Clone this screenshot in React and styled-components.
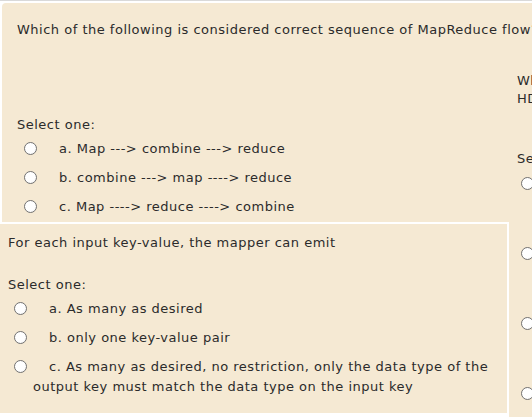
import React from "react";
import styled, { createGlobalStyle } from "styled-components";

const GlobalStyle = createGlobalStyle`
  html, body {
    margin: 0;
    padding: 0;
    background: #ffffff;
  }
  body {
    font-family: "DejaVu Sans", Verdana, sans-serif;
    font-size: 13px;
    letter-spacing: 0.5px;
    color: #2b2b2b;
  }
`;

const Screen = styled.div`
  width: 532px;
  height: 417px;
  overflow: hidden;
  box-sizing: border-box;
  border-top: 1px solid #d9d9d9;
  background: #ffffff;
`;

const Sheet = styled.div`
  display: flex;
  margin: 2px 0 0 2px;
  height: 414px;
  background: #f5e9d3;
  border-top-left-radius: 4px;
`;

const LeftColumn = styled.div`
  flex: 0 0 507px;
  min-width: 0;
  display: flex;
  flex-direction: column;
`;

const RightColumn = styled.div`
  flex: 1;
  min-width: 0;
  padding: 69px 0 0 8px;
  white-space: nowrap;
  overflow: hidden;
`;

const Question = styled.div`
  padding: ${(p) => p.pad};
  line-height: 20px;
`;

const Prompt = styled.div`
  margin-bottom: ${(p) => p.gap}px;
  white-space: ${(p) => (p.nowrap ? "nowrap" : "normal")};
`;

const Select = styled.div`
  margin-bottom: 4px;
`;

const Option = styled.div`
  padding-left: ${(p) => p.indent}px;
  text-indent: -19px;
  line-height: 20px;

  & + & {
    margin-top: 9px;
  }
`;

const Radio = styled.span`
  display: inline-block;
  box-sizing: border-box;
  width: 13px;
  height: 13px;
  border: 1px solid #727272;
  border-radius: 50%;
  background: radial-gradient(circle at 40% 40%, #ffffff 55%, #ececec 100%);
  vertical-align: -2px;
  margin-right: ${(p) => p.gap}px;
  text-indent: 0;
`;

const Overlay = styled.div`
  margin-left: -2px;
  margin-top: auto;
  border-top: 2px solid #ffffff;
  border-right: 2px solid #ffffff;
  border-bottom: 4px solid #ffffff;
  background: #f5e9d3;
  height: 195px;
  flex-shrink: 0;
  box-sizing: border-box;
`;

const SideText = styled.div`
  line-height: 18px;
`;

const SideSelect = styled.div`
  margin-top: 42px;
  line-height: 18px;
`;

const SideOption = styled.div`
  height: 70px;
  padding: 8px 0 0 4px;
  box-sizing: border-box;
`;

export default function App() {
  return (
    <>
      <GlobalStyle />
      <Screen>
        <Sheet>
          <LeftColumn>
            <Question pad="17px 0 0 15px">
              <Prompt gap={75} nowrap>
                Which of the following is considered correct sequence of
                MapReduce flow?
              </Prompt>
              <Select>Select one:</Select>
              <Option indent={26}>
                <Radio gap={22} />a. Map ---&gt; combine ---&gt; reduce
              </Option>
              <Option indent={26}>
                <Radio gap={22} />b. combine ---&gt; map ----&gt; reduce
              </Option>
              <Option indent={26}>
                <Radio gap={22} />c. Map ----&gt; reduce ----&gt; combine
              </Option>
            </Question>
            <Overlay>
              <Question pad="9px 0 0 8px">
                <Prompt gap={22}>For each input key-value, the mapper can emit</Prompt>
                <Select>Select one:</Select>
                <Option indent={25}>
                  <Radio gap={22} />a. As many as desired
                </Option>
                <Option indent={25}>
                  <Radio gap={22} />b. only one key-value pair
                </Option>
                <Option indent={25}>
                  <Radio gap={22} />c. As many as desired, no restriction, only
                  the data type of the output key must match the data type on
                  the input key
                </Option>
              </Question>
            </Overlay>
          </LeftColumn>
          <RightColumn>
            <SideText>Which of the following is not a feature of</SideText>
            <SideText>HDFS?</SideText>
            <SideSelect>Select one:</SideSelect>
            <SideOption>
              <Radio gap={8} />a. Fault tolerant
            </SideOption>
            <SideOption>
              <Radio gap={8} />b. Scalable
            </SideOption>
            <SideOption>
              <Radio gap={8} />c. Random access
            </SideOption>
            <SideOption>
              <Radio gap={8} />d. Write once read many
            </SideOption>
          </RightColumn>
        </Sheet>
      </Screen>
    </>
  );
}
